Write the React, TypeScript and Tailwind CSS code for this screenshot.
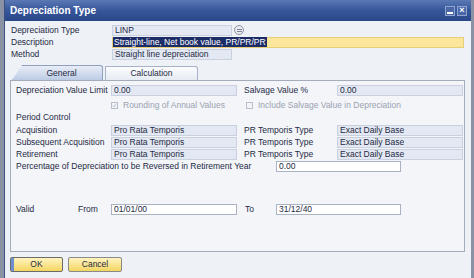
import React from 'react';

const fieldCls = 'h-[11px] border border-[#c9d1e0] bg-[#e3e8f2] pl-[2px] leading-[9px] text-[#1e2a44]';
const whiteCls = 'h-[11px] border border-[#aab3c4] bg-white pl-[2px] leading-[9px] text-[#1e2a44]';

function Row({ label, children }: { label: string; children: React.ReactNode }) {
  return (
    <div className="flex h-[12px] items-center">
      <div className="w-[101px]">{label}</div>
      {children}
    </div>
  );
}

function Check({ label, checked }: { label: string; checked?: boolean }) {
  return (
    <div className="flex items-center gap-[5px] text-[#9aa2b0]">
      <div className="flex h-[7px] w-[7px] items-center justify-center border border-[#b8bfcc] bg-[#f3f5f9]">
        {checked && (
          <svg width="7" height="7" viewBox="0 0 7 7">
            <path d="M1 3.5 L3 5.5 L6 1.2" stroke="#aab2c0" strokeWidth="1.1" fill="none" />
          </svg>
        )}
      </div>
      <span>{label}</span>
    </div>
  );
}

function PairRow({ l1, v1, l2, v2 }: { l1: string; v1: string; l2: string; v2: string }) {
  return (
    <div className="flex h-[12px] items-center">
      <div className="w-[95px]">{l1}</div>
      <div className={`${fieldCls} w-[126px]`}>{v1}</div>
      <div className="w-[100px] pl-[7px]">{l2}</div>
      <div className={`${fieldCls} w-[126px]`}>{v2}</div>
    </div>
  );
}

export default function App() {
  return (
    <div className="h-[278px] w-[474px] overflow-hidden bg-[#8a93a6] text-[8.5px] font-['Liberation_Sans',Arial,sans-serif] text-[#1e2a44]">
      <div className="ml-[4px] flex h-[278px] w-[467px] flex-col border-l border-[#3b5080] bg-[#eef1f6]">
        {/* Title bar */}
        <div className="flex h-[21px] items-center justify-between bg-gradient-to-b from-[#5a78b4] via-[#35569a] to-[#2a4889] pl-[5px] pr-[4px]">
          <span className="text-[10px] font-bold text-white">Depreciation Type</span>
          <div className="flex gap-[2px]">
            <div className="flex h-[10px] w-[10px] items-end justify-center border border-[#8ea4cf] bg-[#4a68a8] pb-[1px]">
              <div className="h-[2px] w-[6px] bg-white" />
            </div>
            <div className="flex h-[10px] w-[10px] items-center justify-center border border-[#8ea4cf] bg-[#4a68a8] text-[9px] font-bold leading-none text-white">
              ×
            </div>
          </div>
        </div>

        {/* Header fields */}
        <div className="flex flex-col pl-[6px] pr-[7px] pt-[3px]">
          <Row label="Depreciation Type">
            <div className={`${fieldCls} w-[120px]`}>LINP</div>
            <div className="ml-[2px] flex h-[10px] w-[10px] items-center justify-center rounded-full border border-[#8e96a6] bg-[#e8ebf1]">
              <div className="h-[3px] w-[5px] border-y border-[#7d8596]" />
            </div>
          </Row>
          <Row label="Description">
            <div className="flex h-[11px] flex-1 items-center border border-[#e7cf78] bg-[#fbe79b]">
              <span className="h-[10px] bg-[#1c2c66] pl-[1px] pr-[1px] leading-[10px] text-white">Straight-line, Net book value, PR/PR/PR</span>
            </div>
          </Row>
          <Row label="Method">
            <div className={`${fieldCls} w-[120px]`}>Straight line depreciation</div>
          </Row>
        </div>

        {/* Tabs */}
        <div className="mt-[5px] flex h-[15px] items-end pl-[7px]">
          <div className="flex h-[15px] w-[91px] items-center justify-center rounded-tr-[3px] border border-b-0 border-[#8fa0bf] bg-gradient-to-b from-[#e9eef7] to-[#bccbe4] pl-[8px] [clip-path:polygon(10px_0,100%_0,100%_100%,0_100%)]">
            General
          </div>
          <div className="ml-[2px] flex h-[14px] w-[93px] items-center justify-center rounded-tr-[3px] border border-b-0 border-[#a7b2c6] bg-gradient-to-b from-[#fbfcfe] to-[#e6ebf3]">
            Calculation
          </div>
        </div>

        {/* Panel */}
        <div className="ml-[5px] mr-[6px] flex h-[172px] flex-col border border-[#a4acbb] bg-[#f3f5f9] pl-[5px] pt-[3px]">
          <PairRow l1="Depreciation Value Limit" v1="0.00" l2="Salvage Value %" v2="0.00" />
          <div className="mt-[3px] flex h-[12px] items-center">
            <div className="w-[95px]" />
            <div className="w-[135px]">
              <Check label="Rounding of Annual Values" checked />
            </div>
            <Check label="Include Salvage Value in Depreciation" />
          </div>
          <div className="flex h-[13px] items-center">Period Control</div>
          <PairRow l1="Acquisition" v1="Pro Rata Temporis" l2="PR Temporis Type" v2="Exact Daily Base" />
          <PairRow l1="Subsequent Acquisition" v1="Pro Rata Temporis" l2="PR Temporis Type" v2="Exact Daily Base" />
          <PairRow l1="Retirement" v1="Pro Rata Temporis" l2="PR Temporis Type" v2="Exact Daily Base" />
          <div className="flex h-[12px] items-center">
            <div className="w-[260px]">Percentage of Depreciation to be Reversed in Retirement Year</div>
            <div className={`${whiteCls} w-[125px]`}>0.00</div>
          </div>
          <div className="mt-[31px] flex h-[12px] items-center">
            <div className="w-[62px]">Valid</div>
            <div className="w-[33px]">From</div>
            <div className={`${whiteCls} w-[126px]`}>01/01/00</div>
            <div className="w-[39px] pl-[8px]">To</div>
            <div className={`${whiteCls} w-[125px]`}>31/12/40</div>
          </div>
        </div>

        {/* Buttons */}
        <div className="ml-[5px] mt-[5px] flex gap-[5px]">
          <button className="relative h-[15px] w-[53px] overflow-hidden rounded-[2px] border border-[#6b6b6b] bg-gradient-to-b from-[#fff4bd] to-[#f3d55e] text-[8.5px] text-[#1e2a44]">
            <span className="absolute left-0 top-0 h-full w-[3px] bg-[#6d8fd0]" />
            OK
          </button>
          <button className="h-[15px] w-[54px] rounded-[2px] border border-[#8a8a8a] bg-gradient-to-b from-[#fff4bd] to-[#f3d55e] text-[8.5px] text-[#1e2a44]">
            Cancel
          </button>
        </div>
      </div>
    </div>
  );
}
